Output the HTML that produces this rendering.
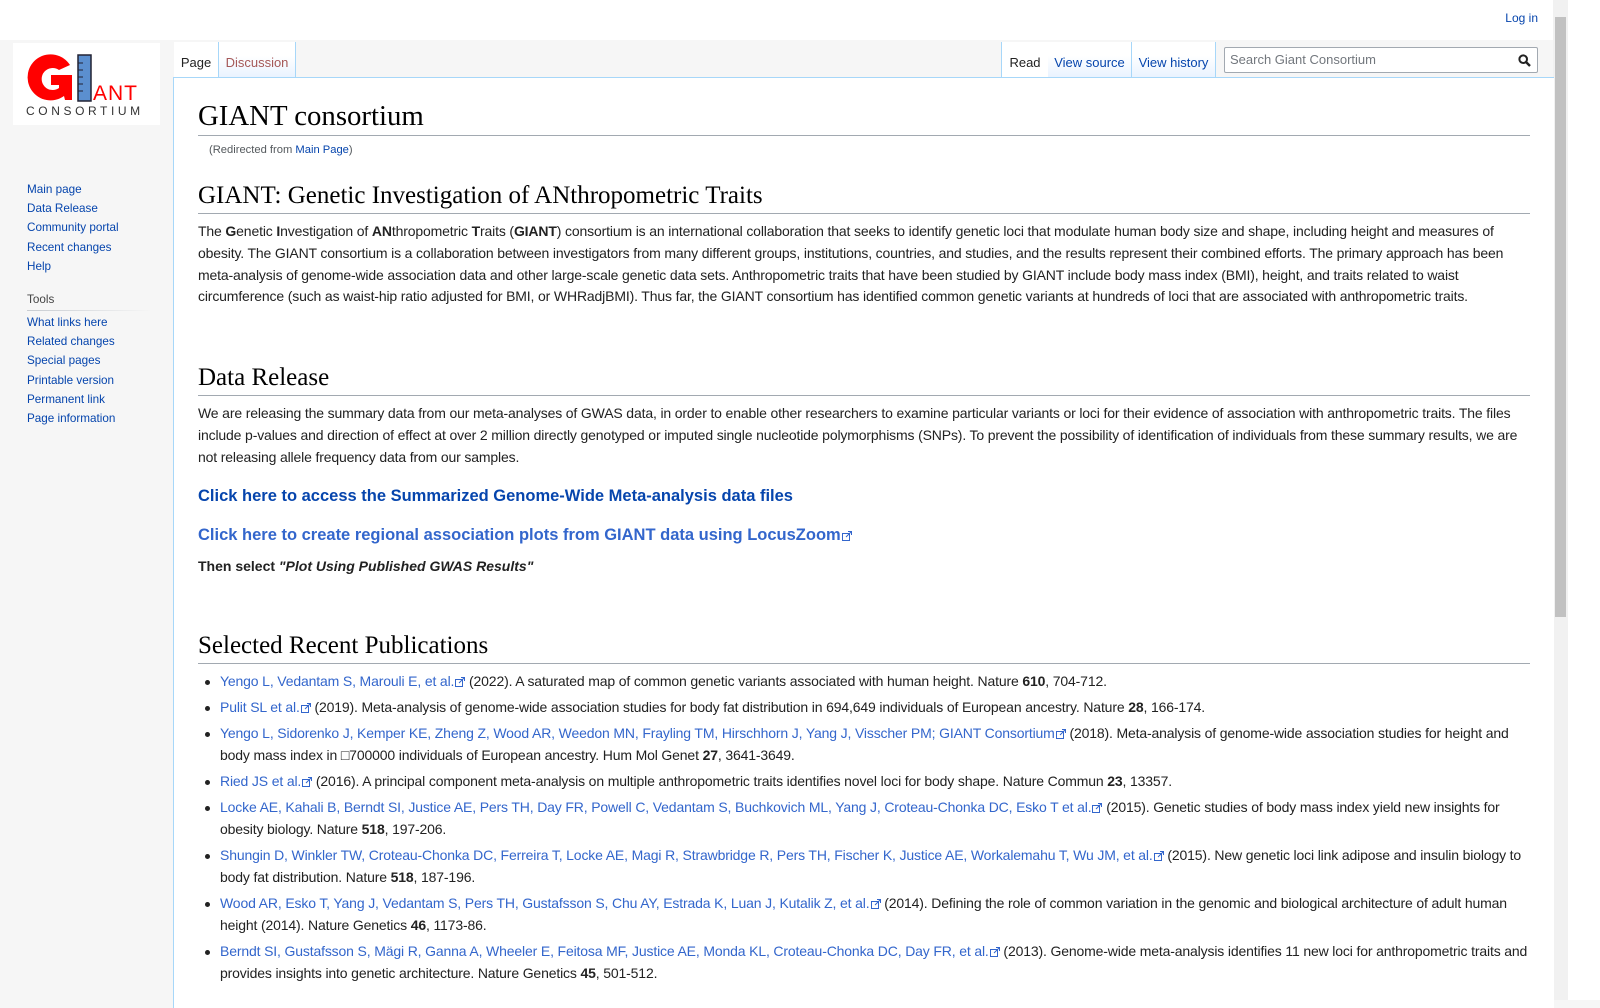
<!DOCTYPE html>
<html><head><meta charset="utf-8"><style>
body{margin:0;width:1600px;height:1000px;overflow:hidden;background:#f6f6f6;font-family:"Liberation Sans",sans-serif;color:#222;position:relative}
a{text-decoration:none;color:#0645ad}
.ext{color:#36c}
.ei{display:inline-block;width:10px;height:10px;vertical-align:-1px;margin-left:1px}
#content{position:absolute;left:173px;top:77px;width:1380px;height:930px;background:#fff;border-left:1px solid #a7d7f9;border-top:1px solid #a7d7f9}
.abs{position:absolute}
h1,h2{font-family:"Liberation Serif",serif;font-weight:normal;margin:0;color:#000;border-bottom:1px solid #a2a9b1;position:absolute;left:24px;width:1332px}
h1{font-size:28.8px;line-height:36px;padding-bottom:1px}
h2{font-size:25px;line-height:32px;padding-bottom:1px}
p{margin:0;font-size:14px;line-height:21.8px;position:absolute;left:24px;width:1334px;letter-spacing:-0.15px}
ul{margin:0;padding:0;list-style:none;position:absolute;left:24px;width:1334px;font-size:14px;line-height:22px;letter-spacing:-0.15px}
li{position:relative;padding-left:22px;margin-bottom:4px}
li:before{content:"";position:absolute;left:7px;top:10px;width:5px;height:5px;border-radius:50%;background:#222}
.side a{display:block;font-size:11.7px;line-height:19.2px;color:#0645ad}
.tab{position:absolute;top:42px;height:35px;font-size:13px;background:linear-gradient(#fff 0%,#fff 40%,#eaf3ff 100%);border-right:1px solid #a7d7f9}
.tab span{position:absolute;bottom:7px;left:0;right:0;text-align:center}
</style></head><body>
<div class="abs" style="left:0;top:0;width:1600px;height:40px;background:#fff"></div>
<a class="abs" href="#" style="right:62px;top:11px;font-size:12px;color:#0645ad">Log in</a>
<!-- logo -->
<div class="abs" style="left:13px;top:43px;width:147px;height:82px;background:#fff">
<svg width="147" height="82" viewBox="0 0 147 82">
<path d="M57 22 L46 27 A11 11 0 1 0 46 45 L46 42 L38 42 L38 32 L59 32 L59 57 L52 57 L51 53 A23 23 0 1 1 57 22 Z" fill="#f00"/>
<rect x="65" y="12" width="13" height="46" fill="#5b8fcf" stroke="#223" stroke-width="1.5"/>
<g stroke="#223" stroke-width="1"><line x1="65" y1="20" x2="70" y2="20"/><line x1="65" y1="27" x2="70" y2="27"/><line x1="65" y1="34" x2="70" y2="34"/><line x1="65" y1="41" x2="70" y2="41"/><line x1="65" y1="48" x2="70" y2="48"/></g>
<text x="80" y="57" font-family="Liberation Sans,sans-serif" font-size="21" fill="#f00" letter-spacing="1">ANT</text>
<text x="13" y="72" font-family="Liberation Sans,sans-serif" font-size="12" letter-spacing="3.6" fill="#333">CONSORTIUM</text>
</svg></div>
<!-- sidebar -->
<div class="side abs" style="left:27px;top:180px"><a href="#">Main page</a><a href="#">Data Release</a><a href="#">Community portal</a><a href="#">Recent changes</a><a href="#">Help</a></div>
<div class="abs" style="left:27px;top:293px;font-size:11.7px;color:#444">Tools</div>
<div class="abs" style="left:27px;top:310px;width:125px;height:1px;background:linear-gradient(90deg,#c8ccd1,#f6f6f6)"></div>
<div class="side abs" style="left:27px;top:313px"><a href="#">What links here</a><a href="#">Related changes</a><a href="#">Special pages</a><a href="#">Printable version</a><a href="#">Permanent link</a><a href="#">Page information</a></div>
<!-- tabs -->
<div class="tab" style="left:174px;width:44px;background:#fff"><span style="color:#222">Page</span></div>
<div class="tab" style="left:219px;width:76px"><span style="color:#a55858">Discussion</span></div>
<div class="tab" style="left:1001px;width:46px;background:#fff;border-left:1px solid #a7d7f9"><span style="color:#222">Read</span></div>
<div class="tab" style="left:1048px;width:83px"><span style="color:#0645ad">View source</span></div>
<div class="tab" style="left:1132px;width:83px"><span style="color:#0645ad">View history</span></div>
<div class="abs" style="left:1224px;top:47px;width:307px;height:24px;border:1px solid #a2a9b1;border-radius:2px;background:#fff;font-size:13px;color:#72777d;line-height:24px;padding-left:5px">Search Giant Consortium
<svg class="abs" style="right:6px;top:6px" width="13" height="13" viewBox="0 0 13 13"><circle cx="5.2" cy="5.2" r="3.8" fill="none" stroke="#222" stroke-width="2"/><line x1="8" y1="8" x2="12" y2="12" stroke="#222" stroke-width="2.4"/></svg></div>
<!-- scrollbar -->
<div class="abs" style="left:1553px;top:0;width:15px;height:1000px;background:#f1f1f1"></div>
<div class="abs" style="left:1555px;top:17px;width:11px;height:600px;background:#c1c1c1"></div>
<div class="abs" style="left:1568px;top:0;width:32px;height:1000px;background:#fff"></div>

<div id="content">
<h1 style="top:20px">GIANT consortium</h1>
<div class="abs" style="left:35px;top:66px;font-size:11.2px;color:#54595d">(Redirected from <a href="#">Main Page</a>)</div>
<h2 style="top:102px">GIANT: Genetic Investigation of ANthropometric Traits</h2>
<p style="top:143px">The <b>G</b>enetic <b>I</b>nvestigation of <b>AN</b>thropometric <b>T</b>raits (<b>GIANT</b>) consortium is an international collaboration that seeks to identify genetic loci that modulate human body size and shape, including height and measures of obesity. The GIANT consortium is a collaboration between investigators from many different groups, institutions, countries, and studies, and the results represent their combined efforts. The primary approach has been meta-analysis of genome-wide association data and other large-scale genetic data sets. Anthropometric traits that have been studied by GIANT include body mass index (BMI), height, and traits related to waist circumference (such as waist-hip ratio adjusted for BMI, or WHRadjBMI). Thus far, the GIANT consortium has identified common genetic variants at hundreds of loci that are associated with anthropometric traits.</p>
<h2 style="top:284px">Data Release</h2>
<p style="top:325px">We are releasing the summary data from our meta-analyses of GWAS data, in order to enable other researchers to examine particular variants or loci for their evidence of association with anthropometric traits. The files include p-values and direction of effect at over 2 million directly genotyped or imputed single nucleotide polymorphisms (SNPs). To prevent the possibility of identification of individuals from these summary results, we are not releasing allele frequency data from our samples.</p>
<p style="top:408px;font-size:16.5px;font-weight:bold;letter-spacing:0"><a href="#">Click here to access the Summarized Genome-Wide Meta-analysis data files</a></p>
<p style="top:447px;font-size:16.5px;font-weight:bold;letter-spacing:0"><a class="ext" href="#">Click here to create regional association plots from GIANT data using LocusZoom<svg class="ei" viewBox="0 0 10 10"><rect x="0.5" y="2.5" width="7" height="7" fill="none" stroke="#36c"/><path d="M4 6 L9.5 0.5 M6 0.5 H9.5 V4" fill="none" stroke="#36c"/></svg></a></p>
<p style="top:478px;font-weight:bold;letter-spacing:0">Then select <i>"Plot Using Published GWAS Results"</i></p>
<h2 style="top:552px">Selected Recent Publications</h2>
<ul style="top:592px">
<li><a class="ext" href="#">Yengo L, Vedantam S, Marouli E, et al.<svg class="ei" viewBox="0 0 10 10"><rect x="0.5" y="2.5" width="7" height="7" fill="none" stroke="#36c"/><path d="M4 6 L9.5 0.5 M6 0.5 H9.5 V4" fill="none" stroke="#36c"/></svg></a> (2022). A saturated map of common genetic variants associated with human height. Nature <b>610</b>, 704-712.</li>
<li><a class="ext" href="#">Pulit SL et al.<svg class="ei" viewBox="0 0 10 10"><rect x="0.5" y="2.5" width="7" height="7" fill="none" stroke="#36c"/><path d="M4 6 L9.5 0.5 M6 0.5 H9.5 V4" fill="none" stroke="#36c"/></svg></a> (2019). Meta-analysis of genome-wide association studies for body fat distribution in 694,649 individuals of European ancestry. Nature <b>28</b>, 166-174.</li>
<li><a class="ext" href="#">Yengo L, Sidorenko J, Kemper KE, Zheng Z, Wood AR, Weedon MN, Frayling TM, Hirschhorn J, Yang J, Visscher PM; GIANT Consortium<svg class="ei" viewBox="0 0 10 10"><rect x="0.5" y="2.5" width="7" height="7" fill="none" stroke="#36c"/><path d="M4 6 L9.5 0.5 M6 0.5 H9.5 V4" fill="none" stroke="#36c"/></svg></a> (2018). Meta-analysis of genome-wide association studies for height and body mass index in □700000 individuals of European ancestry. Hum Mol Genet <b>27</b>, 3641-3649.</li>
<li><a class="ext" href="#">Ried JS et al.<svg class="ei" viewBox="0 0 10 10"><rect x="0.5" y="2.5" width="7" height="7" fill="none" stroke="#36c"/><path d="M4 6 L9.5 0.5 M6 0.5 H9.5 V4" fill="none" stroke="#36c"/></svg></a> (2016). A principal component meta-analysis on multiple anthropometric traits identifies novel loci for body shape. Nature Commun <b>23</b>, 13357.</li>
<li><a class="ext" href="#">Locke AE, Kahali B, Berndt SI, Justice AE, Pers TH, Day FR, Powell C, Vedantam S, Buchkovich ML, Yang J, Croteau-Chonka DC, Esko T et al.<svg class="ei" viewBox="0 0 10 10"><rect x="0.5" y="2.5" width="7" height="7" fill="none" stroke="#36c"/><path d="M4 6 L9.5 0.5 M6 0.5 H9.5 V4" fill="none" stroke="#36c"/></svg></a> (2015). Genetic studies of body mass index yield new insights for obesity biology. Nature <b>518</b>, 197-206.</li>
<li><a class="ext" href="#">Shungin D, Winkler TW, Croteau-Chonka DC, Ferreira T, Locke AE, Magi R, Strawbridge R, Pers TH, Fischer K, Justice AE, Workalemahu T, Wu JM, et al.<svg class="ei" viewBox="0 0 10 10"><rect x="0.5" y="2.5" width="7" height="7" fill="none" stroke="#36c"/><path d="M4 6 L9.5 0.5 M6 0.5 H9.5 V4" fill="none" stroke="#36c"/></svg></a> (2015). New genetic loci link adipose and insulin biology to body fat distribution. Nature <b>518</b>, 187-196.</li>
<li><a class="ext" href="#">Wood AR, Esko T, Yang J, Vedantam S, Pers TH, Gustafsson S, Chu AY, Estrada K, Luan J, Kutalik Z, et al.<svg class="ei" viewBox="0 0 10 10"><rect x="0.5" y="2.5" width="7" height="7" fill="none" stroke="#36c"/><path d="M4 6 L9.5 0.5 M6 0.5 H9.5 V4" fill="none" stroke="#36c"/></svg></a> (2014). Defining the role of common variation in the genomic and biological architecture of adult human height (2014). Nature Genetics <b>46</b>, 1173-86.</li>
<li><a class="ext" href="#">Berndt SI, Gustafsson S, Mägi R, Ganna A, Wheeler E, Feitosa MF, Justice AE, Monda KL, Croteau-Chonka DC, Day FR, et al.<svg class="ei" viewBox="0 0 10 10"><rect x="0.5" y="2.5" width="7" height="7" fill="none" stroke="#36c"/><path d="M4 6 L9.5 0.5 M6 0.5 H9.5 V4" fill="none" stroke="#36c"/></svg></a> (2013). Genome-wide meta-analysis identifies 11 new loci for anthropometric traits and provides insights into genetic architecture. Nature Genetics <b>45</b>, 501-512.</li>
</ul>
</div>
</body></html>
